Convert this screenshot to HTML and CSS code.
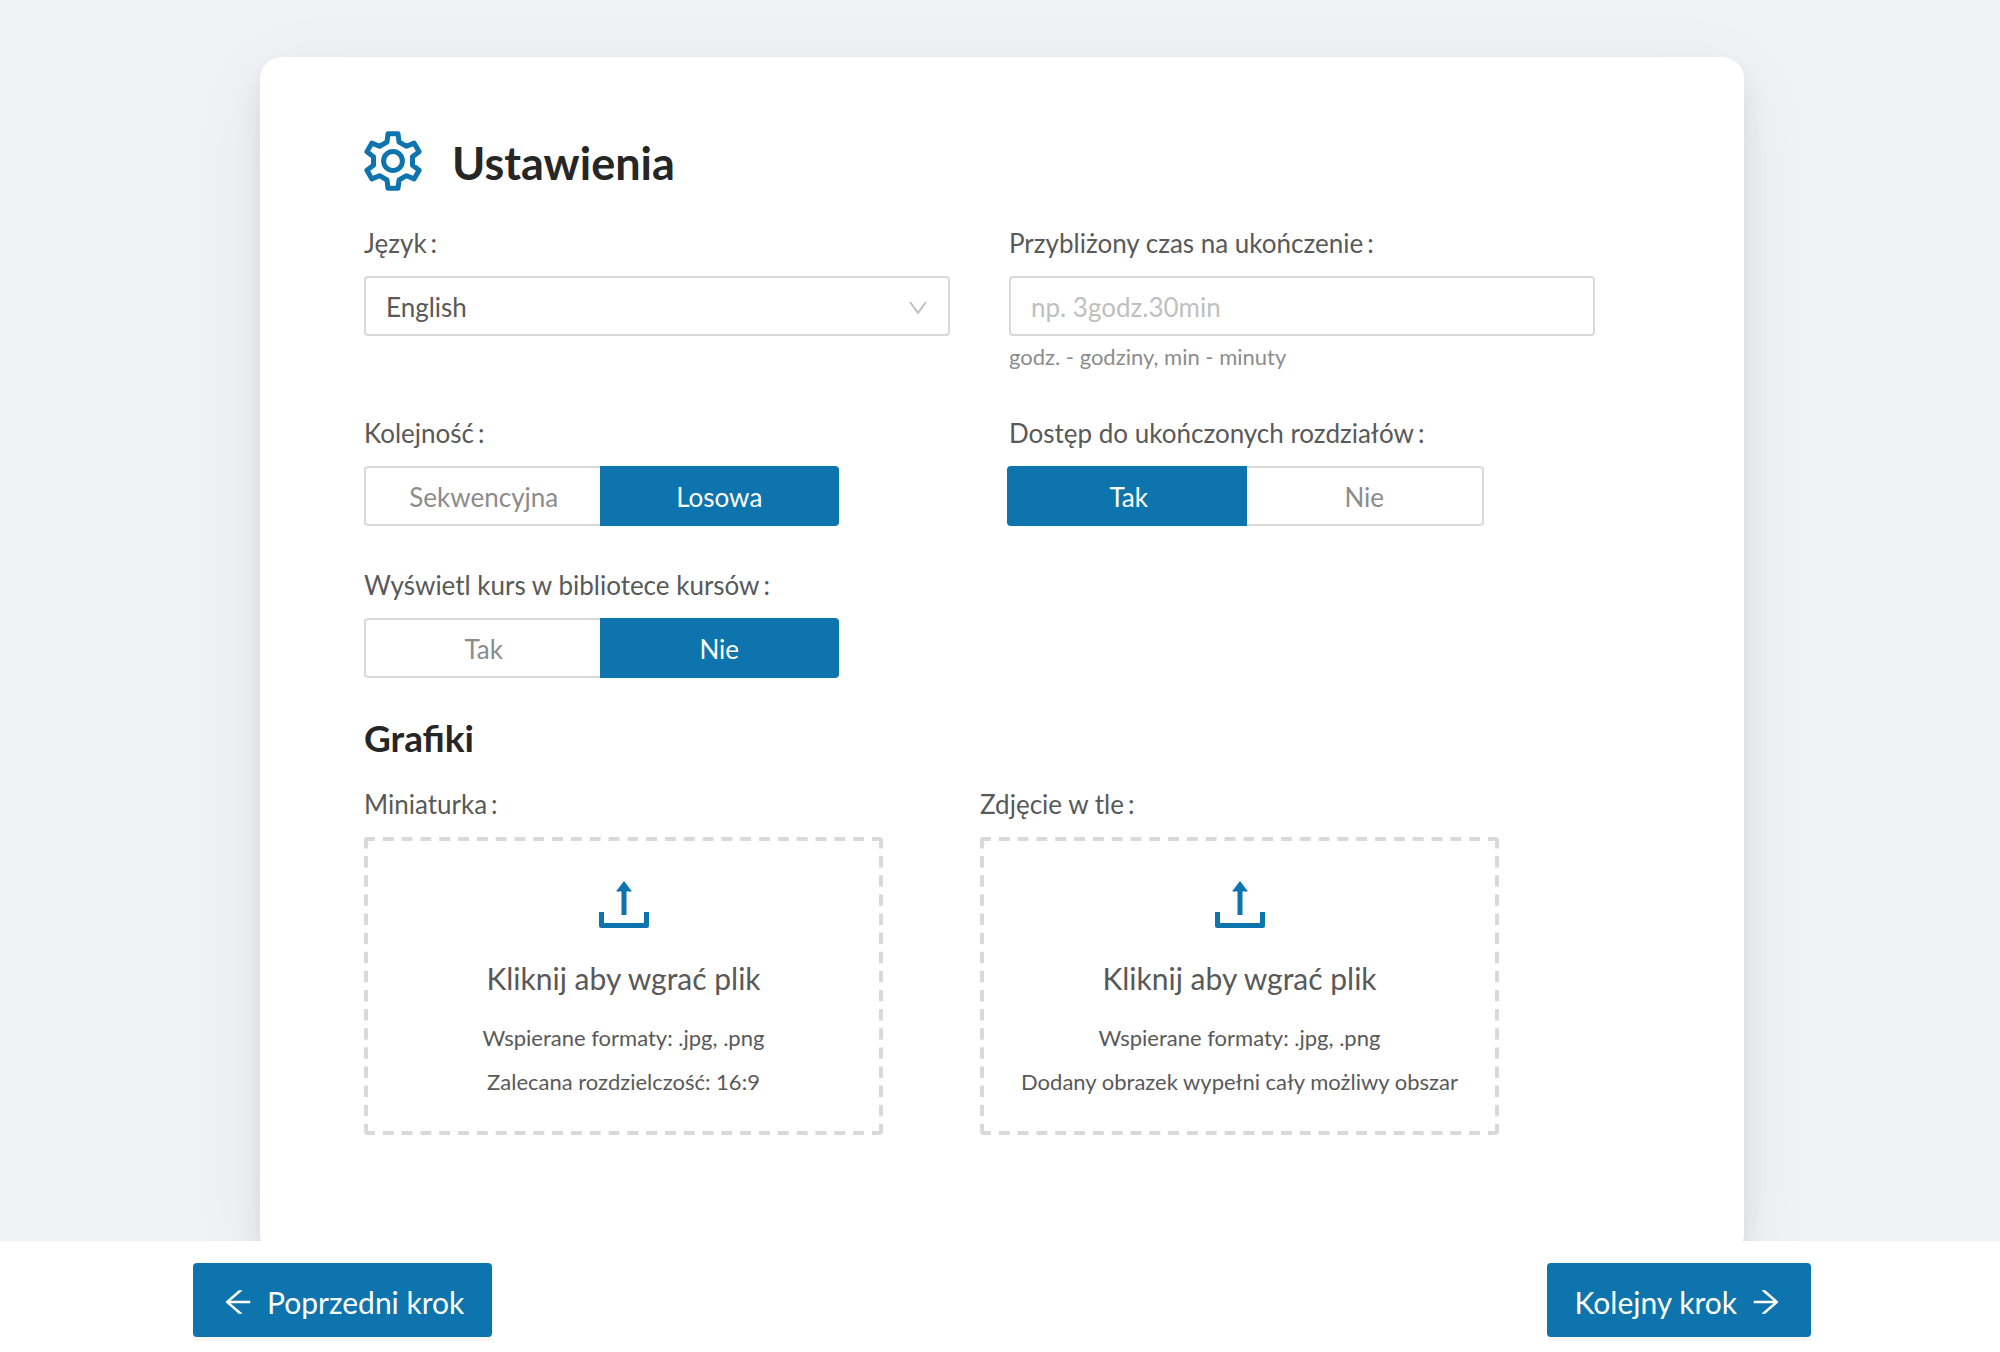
FILE: index.html
```html
<!DOCTYPE html>
<html lang="pl">
<head>
    <meta charset="UTF-8">
    <meta name="viewport" content="width=device-width, initial-scale=1.0">
    <title>Ustawienia</title>
    <link rel="stylesheet" href="styles.css">
</head>
<body>
    <main class="content">
        <form class="card" id="settings">
            <div class="card-header">
                <svg class="gear" viewBox="-29 -30 58 60" aria-hidden="true">
                    <path d="M-5-27.2H5L6-19 13.5-14.7 21.1-17.9 26.1-9.3 19.5-4.3V4.3L26.1 9.3 21.1 17.9 13.5 14.7 6 19 5 27.2H-5L-6 19-13.5 14.7-21.1 17.9-26.1 9.3-19.5 4.3V-4.3L-26.1-9.3-21.1-17.9-13.5-14.7-6-19Z"/>
                    <circle r="9.4"/>
                </svg>
                <h1>Ustawienia</h1>
            </div>

            <div class="fields">
                <div class="field">
                    <label class="field-label" for="language">Język</label>
                    <div class="select">
                        <select id="language">
                            <option selected>English</option>
                            <option>Polski</option>
                        </select>
                        <svg class="arrow-down" viewBox="0 0 1024 1024" aria-hidden="true">
                            <path d="M884 256h-75c-5.1 0-9.9 2.5-12.9 6.6L512 654.2 227.9 262.6c-3-4.1-7.8-6.6-12.9-6.6h-75c-6.5 0-10.3 7.4-6.5 12.7l352.6 486.1c12.8 17.6 39 17.6 51.7 0l352.6-486.1c3.9-5.3.1-12.7-6.4-12.7z"/>
                        </svg>
                    </div>
                </div>

                <div class="field">
                    <label class="field-label" for="duration">Przybliżony czas na ukończenie</label>
                    <input class="text-input" type="text" id="duration" placeholder="np. 3godz.30min">
                    <p class="hint">godz. - godziny, min - minuty</p>
                </div>

                <div class="field" role="radiogroup" aria-labelledby="order-label">
                    <span class="field-label" id="order-label">Kolejność</span>
                    <div class="radio-group">
                        <label><input type="radio" name="order"><span>Sekwencyjna</span></label>
                        <label><input type="radio" name="order" checked><span>Losowa</span></label>
                    </div>
                </div>

                <div class="field" role="radiogroup" aria-labelledby="access-label">
                    <span class="field-label" id="access-label">Dostęp do ukończonych rozdziałów</span>
                    <div class="radio-group">
                        <label><input type="radio" name="access" checked><span>Tak</span></label>
                        <label><input type="radio" name="access"><span>Nie</span></label>
                    </div>
                </div>

                <div class="field" role="radiogroup" aria-labelledby="library-label">
                    <span class="field-label" id="library-label">Wyświetl kurs w bibliotece kursów</span>
                    <div class="radio-group">
                        <label><input type="radio" name="library"><span>Tak</span></label>
                        <label><input type="radio" name="library" checked><span>Nie</span></label>
                    </div>
                </div>
            </div>

            <h2>Grafiki</h2>

            <div class="uploads">
                <div class="field">
                    <label class="field-label" for="thumbnail">Miniaturka</label>
                    <label class="upload">
                        <input type="file" id="thumbnail" accept=".jpg,.png">
                        <svg class="upload-icon" viewBox="0 0 52 48" aria-hidden="true">
                            <path class="line" d="M3.5 31V44.5H48.5V31M26 34V8"/>
                            <path class="head" d="M26 0L34 10.5H18Z"/>
                        </svg>
                        <span class="upload-title">Kliknij aby wgrać plik</span>
                        <span class="upload-text">Wspierane formaty: .jpg, .png</span>
                        <span class="upload-text">Zalecana rozdzielczość: 16:9</span>
                    </label>
                </div>

                <div class="field">
                    <label class="field-label" for="background">Zdjęcie w tle</label>
                    <label class="upload">
                        <input type="file" id="background" accept=".jpg,.png">
                        <svg class="upload-icon" viewBox="0 0 52 48" aria-hidden="true">
                            <path class="line" d="M3.5 31V44.5H48.5V31M26 34V8"/>
                            <path class="head" d="M26 0L34 10.5H18Z"/>
                        </svg>
                        <span class="upload-title">Kliknij aby wgrać plik</span>
                        <span class="upload-text">Wspierane formaty: .jpg, .png</span>
                        <span class="upload-text">Dodany obrazek wypełni cały możliwy obszar</span>
                    </label>
                </div>
            </div>
        </form>
    </main>

    <footer class="footer">
        <button type="button" class="btn">
            <svg viewBox="0 0 1024 1024" aria-hidden="true">
                <path d="M872 474H286.9l350.2-304c5.6-4.9 2.2-14-5.2-14h-88.5c-3.9 0-7.6 1.4-10.5 3.9L155 487.8a31.96 31.96 0 0 0 0 48.3L535.1 866c1.5 1.3 3.3 2 5.2 2h91.5c7.4 0 10.8-9.2 5.2-14L286.9 550H872c4.4 0 8-3.6 8-8v-60c0-4.4-3.6-8-8-8z"/>
            </svg>
            <span>Poprzedni krok</span>
        </button>
        <button type="submit" form="settings" class="btn">
            <span>Kolejny krok</span>
            <svg viewBox="0 0 1024 1024" aria-hidden="true">
                <path d="M869 487.8L491.2 159.9c-2.9-2.5-6.6-3.9-10.5-3.9h-88.5c-7.4 0-10.8 9.2-5.2 14l350.2 304H152c-4.4 0-8 3.6-8 8v60c0 4.4 3.6 8 8 8h585.1L386.9 854c-5.6 4.9-2.2 14 5.2 14h91.5c1.9 0 3.8-.7 5.2-2L869 536.2a32.07 32.07 0 0 0 0-48.4z"/>
            </svg>
        </button>
    </footer>
</body>
</html>
```
FILE: styles.css
```css
* {
    box-sizing: border-box;
}
body {
    margin: 0;
    height: 100vh;
    display: flex;
    flex-direction: column;
    font-family: Lato, sans-serif;
    font-size: 26px;
    color: #595959;
    background-color: #f0f2f5;
}
h1, h2, p {
    margin: 0;
}
h1, h2 {
    color: #262626;
    font-weight: bold;
}
input, select, button {
    font: inherit;
    color: inherit;
}

.content {
    flex: 1;
    min-height: 0;
    overflow: auto;
    scrollbar-width: none;
    padding: 57px 256px 0 260px;
}
.card {
    padding: 74px 149px 121px 104px;
    background-color: white;
    border-radius: 22px;
    box-shadow: 0 16px 28px rgba(0, 0, 0, 0.08), 0 16px 80px rgba(0, 0, 0, 0.06);
}
.card-header {
    display: flex;
    align-items: flex-start;
    gap: 30px;
    margin-bottom: 28px;
}
.card-header h1 {
    font-size: 45px;
    line-height: 64px;
}
.gear {
    width: 58px;
    height: 60px;
    fill: none;
    stroke: #0d74ad;
    stroke-width: 5;
    stroke-linejoin: round;
}

.fields {
    display: grid;
    grid-template-columns: 1fr 1fr;
    gap: 39px 59px;
}
.field-label {
    display: block;
    margin-bottom: 13px;
    line-height: 40px;
}
.field-label::after {
    content: ":";
    margin-left: 4px;
}
.select {
    position: relative;
}
.select select, .text-input {
    display: block;
    width: 100%;
    height: 60px;
    padding: 2px 20px 0;
    border: 2px solid #d9d9d9;
    border-radius: 4px;
    background-color: white;
}
.select select {
    appearance: none;
}
.arrow-down {
    position: absolute;
    top: 20px;
    right: 20px;
    width: 24px;
    height: 24px;
    fill: #bfbfbf;
    pointer-events: none;
}
.text-input::placeholder {
    color: #bfbfbf;
}
.hint {
    padding-top: 4px;
    font-size: 22px;
    line-height: 34px;
    color: #8c8c8c;
}

.radio-group {
    display: flex;
    max-width: 475px;
}
.radio-group label {
    flex: 1;
    cursor: pointer;
}
.radio-group input {
    position: absolute;
    opacity: 0;
}
.radio-group span {
    display: block;
    height: 60px;
    border: 2px solid #d9d9d9;
    line-height: 58px;
    text-align: center;
    color: #8c8c8c;
}
.radio-group label:first-child span {
    border-right: 0;
    border-radius: 4px 0 0 4px;
}
.radio-group label:last-child span {
    border-left: 0;
    border-radius: 0 4px 4px 0;
}
.radio-group input:checked + span {
    color: white;
    border-color: #0d74ad;
    background-color: #0d74ad;
    box-shadow: -2px 0 0 #0d74ad;
}

h2 {
    margin: 35px 0 21px;
    font-size: 37px;
    line-height: 50px;
}
.uploads {
    display: grid;
    grid-template-columns: repeat(2, minmax(0, 519px));
    gap: 97px;
}
.upload {
    display: flex;
    flex-direction: column;
    align-items: center;
    padding: 44px 20px 31px;
    border-radius: 4px;
    cursor: pointer;
    /* dashes on the four sides, longer than a dashed border draws them */
    background:
        repeat-x top left / calc((100% - 11px) / 27) 4px linear-gradient(90deg, #d9d9d9 11px, transparent 11px),
        repeat-x bottom left / calc((100% - 11px) / 27) 4px linear-gradient(90deg, #d9d9d9 11px, transparent 11px),
        repeat-y top left / 4px calc((100% - 11px) / 15) linear-gradient(#d9d9d9 11px, transparent 11px),
        repeat-y top right / 4px calc((100% - 11px) / 15) linear-gradient(#d9d9d9 11px, transparent 11px);
}
.upload input {
    position: absolute;
    width: 1px;
    height: 1px;
    opacity: 0;
}
.upload-icon {
    width: 52px;
    height: 48px;
    margin-bottom: 25px;
}
.upload-icon .line {
    fill: none;
    stroke: #0d74ad;
    stroke-width: 5;
    stroke-linejoin: round;
}
.upload-icon .head {
    fill: #0d74ad;
}
.upload-title {
    margin-bottom: 14px;
    font-size: 30px;
    line-height: 48px;
}
.upload-text {
    font-size: 22px;
    line-height: 44px;
}

.footer {
    display: flex;
    justify-content: space-between;
    padding: 22px 189px 15px 193px;
    background-color: white;
}
.btn {
    display: flex;
    align-items: center;
    gap: 12px;
    height: 74px;
    padding: 4px 28px 0;
    border: 0;
    border-radius: 4px;
    background-color: #0d74ad;
    box-shadow: 0 4px 0 rgba(0, 0, 0, 0.04);
    color: white;
    font-size: 30px;
    cursor: pointer;
}
.btn svg {
    width: 34px;
    height: 34px;
    fill: currentColor;
}
```
